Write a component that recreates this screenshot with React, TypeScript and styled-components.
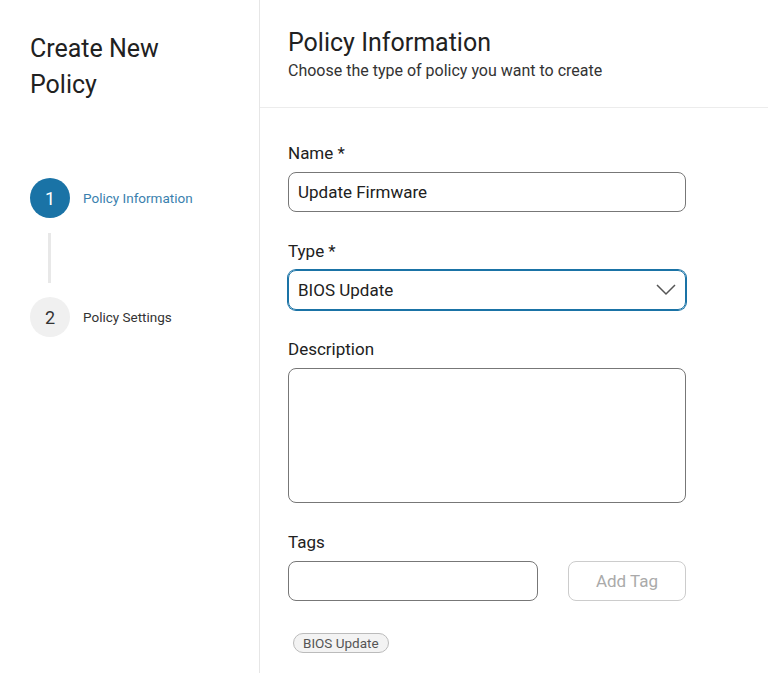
import styled, { createGlobalStyle } from 'styled-components';

const Global = createGlobalStyle`
  body { margin: 0; font-family: Roboto, "Liberation Sans", sans-serif; color: #212121; background: #fff; }
  * { box-sizing: border-box; }
`;

const Page = styled.div`
  display: flex;
  height: 673px;
  overflow: hidden;
`;

const Sidebar = styled.aside`
  width: 260px;
  flex-shrink: 0;
  border-right: 1px solid #e6e6e6;
  padding: 31px 0 0 30px;
`;

const SideTitle = styled.h1`
  margin: 0;
  font-size: 25px;
  font-weight: 400;
  line-height: 36px;
  color: #212121;
`;

const Steps = styled.div`
  margin-top: 75px;
  display: flex;
  flex-direction: column;
`;

const Step = styled.div`
  display: flex;
  align-items: center;
  gap: 13px;
`;

const Circle = styled.div<{ $active?: boolean }>`
  width: 40px;
  height: 40px;
  border-radius: 50%;
  display: flex;
  align-items: center;
  justify-content: center;
  font-size: 18px;
  background: ${p => (p.$active ? '#1a73a6' : '#f0f0f0')};
  color: ${p => (p.$active ? '#fff' : '#333')};
`;

const StepLabel = styled.span<{ $active?: boolean }>`
  font-size: 13.5px;
  color: ${p => (p.$active ? '#3a7fae' : '#333')};
`;

const Connector = styled.div`
  width: 3px;
  height: 50px;
  margin: 15px 0 14px 18px;
  background: #e8e8e8;
`;

const Main = styled.main`
  flex: 1;
  padding-top: 27px;
`;

const Header = styled.div`
  padding: 0 0 27px 28px;
  border-bottom: 1px solid #ececec;
`;

const Title = styled.h2`
  margin: 0;
  font-size: 25px;
  font-weight: 400;
  line-height: 32px;
`;

const Subtitle = styled.p`
  margin: 2px 0 0;
  font-size: 16px;
  color: #333;
`;

const Form = styled.div`
  padding: 34px 0 0 28px;
  width: 426px;
  display: flex;
  flex-direction: column;
`;

const Field = styled.div`
  display: flex;
  flex-direction: column;
  margin-bottom: 28px;
`;

const Label = styled.label`
  font-size: 17px;
  margin-bottom: 8px;
  line-height: 22px;
`;

const Box = styled.div<{ $focus?: boolean; $h?: number }>`
  height: ${p => p.$h ?? 40}px;
  border: 1px solid ${p => (p.$focus ? '#1a73a6' : '#777')};
  box-shadow: ${p => (p.$focus ? '0 0 0 1px #1a73a6' : 'none')};
  border-radius: 8px;
  padding: 0 9px;
  display: flex;
  align-items: center;
  justify-content: space-between;
  font-size: 17px;
`;

const TagRow = styled.div`
  display: flex;
  gap: 30px;
`;

const TagInput = styled(Box)`
  width: 250px;
`;

const AddTag = styled.button`
  width: 118px;
  height: 40px;
  border: 1px solid #ccc;
  border-radius: 8px;
  background: #fff;
  color: #aaa;
  font-size: 17px;
  font-family: inherit;
`;

const Chip = styled.span`
  align-self: flex-start;
  margin: 32px 0 0 5px;
  padding: 1px 9px;
  border: 1px solid #bbb;
  border-radius: 12px;
  background: #f3f3f3;
  color: #555;
  font-size: 13.5px;
`;

export default function App() {
  return (
    <Page>
      <Global />
      <Sidebar>
        <SideTitle>Create New<br />Policy</SideTitle>
        <Steps>
          <Step>
            <Circle $active>1</Circle>
            <StepLabel $active>Policy Information</StepLabel>
          </Step>
          <Connector />
          <Step>
            <Circle>2</Circle>
            <StepLabel>Policy Settings</StepLabel>
          </Step>
        </Steps>
      </Sidebar>
      <Main>
        <Header>
          <Title>Policy Information</Title>
          <Subtitle>Choose the type of policy you want to create</Subtitle>
        </Header>
        <Form>
          <Field>
            <Label>Name *</Label>
            <Box>Update Firmware</Box>
          </Field>
          <Field>
            <Label>Type *</Label>
            <Box $focus>
              BIOS Update
              <svg width="20" height="12" viewBox="0 0 20 12" fill="none" stroke="#555" strokeWidth="1.5">
                <path d="M1 1l9 9 9-9" />
              </svg>
            </Box>
          </Field>
          <Field>
            <Label>Description</Label>
            <Box $h={135} />
          </Field>
          <Field>
            <Label>Tags</Label>
            <TagRow>
              <TagInput />
              <AddTag>Add Tag</AddTag>
            </TagRow>
            <Chip>BIOS Update</Chip>
          </Field>
        </Form>
      </Main>
    </Page>
  );
}
